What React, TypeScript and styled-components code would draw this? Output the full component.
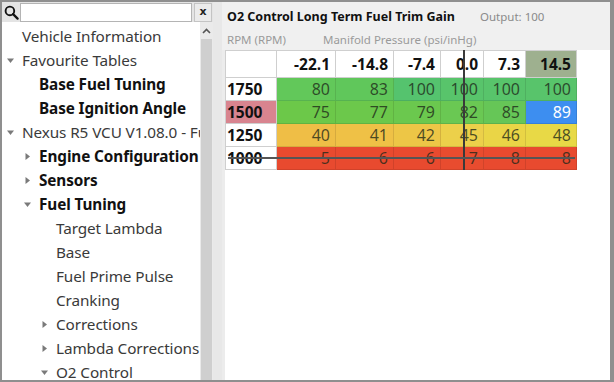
import React from 'react';
import styled, { createGlobalStyle } from 'styled-components';

const GlobalStyle = createGlobalStyle`
  html, body {
    margin: 0;
    padding: 0;
    overflow: hidden;
    background: #ffffff;
  }
  * {
    box-sizing: border-box;
  }
`;

type TreeItem = {
  label: string;
  level: number;
  bold?: boolean;
  arrow?: 'open' | 'closed';
};

const treeItems: TreeItem[] = [
  { label: 'Vehicle Information', level: 0 },
  { label: 'Favourite Tables', level: 0, arrow: 'open' },
  { label: 'Base Fuel Tuning', level: 1, bold: true },
  { label: 'Base Ignition Angle', level: 1, bold: true },
  { label: 'Nexus R5 VCU V1.08.0 - Fuel', level: 0, arrow: 'open' },
  { label: 'Engine Configuration', level: 1, bold: true, arrow: 'closed' },
  { label: 'Sensors', level: 1, bold: true, arrow: 'closed' },
  { label: 'Fuel Tuning', level: 1, bold: true, arrow: 'open' },
  { label: 'Target Lambda', level: 2 },
  { label: 'Base', level: 2 },
  { label: 'Fuel Prime Pulse', level: 2 },
  { label: 'Cranking', level: 2 },
  { label: 'Corrections', level: 2, arrow: 'closed' },
  { label: 'Lambda Corrections', level: 2, arrow: 'closed' },
  { label: 'O2 Control', level: 2, arrow: 'open' },
];

const columns = ['-22.1', '-14.8', '-7.4', '0.0', '7.3', '14.5'];
const colWidths = [51, 59, 58, 47, 43, 42, 51];

type Cell = { v: number; bg: string; fg?: string };
type Row = { rpm: string; headBg?: string; cells: Cell[] };

const rows: Row[] = [
  {
    rpm: '1750',
    cells: [
      { v: 80, bg: '#62c85a' },
      { v: 83, bg: '#60c75b' },
      { v: 100, bg: '#55c36e' },
      { v: 100, bg: '#58c46b' },
      { v: 100, bg: '#58c46b' },
      { v: 100, bg: '#58c46b' },
    ],
  },
  {
    rpm: '1500',
    headBg: '#d8848f',
    cells: [
      { v: 75, bg: '#6cc849' },
      { v: 77, bg: '#6cc84b' },
      { v: 79, bg: '#6bc84e' },
      { v: 82, bg: '#6ac853' },
      { v: 85, bg: '#66c657' },
      { v: 89, bg: '#3d8ef0', fg: '#ffffff' },
    ],
  },
  {
    rpm: '1250',
    cells: [
      { v: 40, bg: '#efbe46' },
      { v: 41, bg: '#efc146' },
      { v: 42, bg: '#edc646' },
      { v: 45, bg: '#ecd04a' },
      { v: 46, bg: '#ead546' },
      { v: 48, bg: '#e8d946' },
    ],
  },
  {
    rpm: '1000',
    cells: [
      { v: 5, bg: '#e84a2f' },
      { v: 6, bg: '#e84a2f' },
      { v: 6, bg: '#e84a2f' },
      { v: 7, bg: '#e84c2f' },
      { v: 8, bg: '#e84a2f' },
      { v: 8, bg: '#e84a2f' },
    ],
  },
];

const Arrow: React.FC<{ dir: 'open' | 'closed' }> = ({ dir }) => (
  <ArrowBox>
    {dir === 'open' ? (
      <svg width="9" height="9" viewBox="0 0 9 9">
        <polygon points="1,2.5 8,2.5 4.5,7" fill="#7a7a7a" />
      </svg>
    ) : (
      <svg width="9" height="9" viewBox="0 0 9 9">
        <polygon points="2.5,1 7,4.5 2.5,8" fill="#7a7a7a" />
      </svg>
    )}
  </ArrowBox>
);

const App: React.FC = () => {
  return (
    <>
      <GlobalStyle />
      <Frame>
        <Sidebar>
          <SearchBar>
            <SearchIcon>
              <svg width="15" height="15" viewBox="0 0 16 16">
                <circle cx="6.3" cy="6.3" r="4.6" fill="none" stroke="#111" strokeWidth="2" />
                <line x1="9.7" y1="9.7" x2="14.5" y2="14.5" stroke="#111" strokeWidth="2.4" strokeLinecap="round" />
              </svg>
            </SearchIcon>
            <SearchInput />
            <ClearButton>x</ClearButton>
          </SearchBar>
          <TreeArea>
            <TreeList>
              {treeItems.map((item) => (
                <TreeRow key={item.label} $level={item.level}>
                  {item.arrow ? <Arrow dir={item.arrow} /> : <ArrowBox />}
                  <TreeLabel $bold={item.bold}>{item.label}</TreeLabel>
                </TreeRow>
              ))}
            </TreeList>
            <ScrollBar>
              <ScrollUp>
                <svg width="9" height="6" viewBox="0 0 9 6">
                  <polyline points="1,5 4.5,1.5 8,5" fill="none" stroke="#555" strokeWidth="1.6" />
                </svg>
              </ScrollUp>
              <ScrollThumb />
            </ScrollBar>
          </TreeArea>
        </Sidebar>
        <Splitter />
        <Panel>
          <PanelHeader>
            <TitleRow>
              <Title>O2 Control Long Term Fuel Trim Gain</Title>
              <Output>Output: 100</Output>
            </TitleRow>
            <AxisRow>
              <AxisLabel>RPM (RPM)</AxisLabel>
              <AxisLabel>Manifold Pressure (psi/inHg)</AxisLabel>
            </AxisRow>
          </PanelHeader>
          <PanelBody>
            <TableWrap>
              <Grid $cols={colWidths}>
                <CornerCell />
                {columns.map((c, i) => (
                  <ColHead key={c} $active={i === columns.length - 1}>
                    {c}
                  </ColHead>
                ))}
                {rows.map((r) => (
                  <React.Fragment key={r.rpm}>
                    <RowHead $bg={r.headBg}>{r.rpm}</RowHead>
                    {r.cells.map((c, i) => (
                      <ValueCell key={i} $bg={c.bg} $fg={c.fg}>
                        {c.v}
                      </ValueCell>
                    ))}
                  </React.Fragment>
                ))}
              </Grid>
              <CursorLine />
              <StrikeLine />
            </TableWrap>
          </PanelBody>
        </Panel>
      </Frame>
    </>
  );
};

export default App;

const Frame = styled.div`
  width: 614px;
  height: 382px;
  display: flex;
  border: 2px solid #8f8f8f;
  border-right-width: 4px;
  background: #ffffff;
  font-family: 'Noto Sans', 'Open Sans', sans-serif;
  overflow: hidden;
`;

const Sidebar = styled.div`
  width: 211px;
  display: flex;
  flex-direction: column;
  background: #ffffff;
`;

const SearchBar = styled.div`
  height: 20px;
  display: flex;
  align-items: center;
  background: #e4e4e4;
  padding-right: 1px;
`;

const SearchIcon = styled.div`
  width: 18px;
  display: flex;
  justify-content: center;
  align-items: center;
`;

const SearchInput = styled.div`
  flex: 1;
  height: 19px;
  background: #ffffff;
  border: 1px solid #b4b4b4;
`;

const ClearButton = styled.div`
  width: 18px;
  height: 19px;
  margin-left: 2px;
  border: 1px solid #c4c4c4;
  background: #ebebeb;
  font-family: 'DejaVu Sans', sans-serif;
  font-size: 11px;
  font-weight: 700;
  color: #222;
  display: flex;
  align-items: center;
  justify-content: center;
  line-height: 1;
  padding-bottom: 2px;
`;

const TreeArea = styled.div`
  flex: 1;
  display: flex;
  min-height: 0;
`;

const TreeList = styled.div`
  flex: 1;
  overflow: hidden;
  padding-top: 2px;
`;

const TreeRow = styled.div<{ $level: number }>`
  height: 24px;
  display: flex;
  align-items: center;
  padding-left: ${(p) => 2 + p.$level * 17}px;
  white-space: nowrap;
`;

const ArrowBox = styled.span`
  width: 18px;
  flex-shrink: 0;
  display: flex;
  align-items: center;
  padding-left: 2px;
`;

const TreeLabel = styled.span<{ $bold?: boolean }>`
  font-size: 15.3px;
  color: ${(p) => (p.$bold ? '#111111' : '#3a3a3a')};
  font-weight: ${(p) => (p.$bold ? 700 : 400)};
  letter-spacing: -0.1px;
`;

const ScrollBar = styled.div`
  width: 13px;
  display: flex;
  flex-direction: column;
  background: #eaeaea;
`;

const ScrollUp = styled.div`
  height: 17px;
  display: flex;
  align-items: center;
  justify-content: center;
`;

const ScrollThumb = styled.div`
  flex: 1;
  margin: 0 1px;
  background: #cfcfcf;
`;

const Splitter = styled.div`
  width: 9px;
  background: #e8e8e8;
`;

const Panel = styled.div`
  flex: 1;
  display: flex;
  flex-direction: column;
  background: #f0f0f0;
`;

const PanelHeader = styled.div`
  height: 48px;
  padding: 6px 0 0 5px;
  display: flex;
  flex-direction: column;
`;

const TitleRow = styled.div`
  display: flex;
  align-items: baseline;
  height: 18px;
`;

const Title = styled.div`
  font-size: 12.5px;
  font-weight: 700;
  color: #111;
  width: 253px;
`;

const Output = styled.div`
  font-size: 11.5px;
  color: #8a8a8a;
`;

const AxisRow = styled.div`
  display: flex;
  gap: 37px;
  margin-top: 6px;
`;

const AxisLabel = styled.div`
  font-size: 11.5px;
  color: #9a9a9a;
`;

const PanelBody = styled.div`
  flex: 1;
  background: #ffffff;
  border-left: 3px solid #ececec;
`;

const TableWrap = styled.div`
  position: relative;
  width: max-content;
`;

const Grid = styled.div<{ $cols: number[] }>`
  display: grid;
  grid-template-columns: ${(p) => p.$cols.map((c) => `${c}px`).join(' ')};
  grid-template-rows: 27px repeat(4, 23px);
  border-left: 1px solid #cfcfcf;
  border-top: 1px solid #cfcfcf;
`;

const CornerCell = styled.div`
  background: #ffffff;
  border-right: 1px solid #cfcfcf;
  border-bottom: 1px solid #cfcfcf;
`;

const ColHead = styled.div<{ $active?: boolean }>`
  background: ${(p) => (p.$active ? '#9eb08f' : '#ffffff')};
  border-right: 1px solid #cfcfcf;
  border-bottom: 1px solid #cfcfcf;
  font-size: 15.5px;
  font-weight: 700;
  color: #111;
  display: flex;
  align-items: center;
  justify-content: flex-end;
  padding-right: 5px;
`;

const RowHead = styled.div<{ $bg?: string }>`
  background: ${(p) => p.$bg ?? '#ffffff'};
  border-right: 1px solid #cfcfcf;
  border-bottom: 1px solid #cfcfcf;
  font-size: 15.5px;
  font-weight: 700;
  color: #111;
  display: flex;
  align-items: center;
  padding-left: 1px;
`;

const ValueCell = styled.div<{ $bg: string; $fg?: string }>`
  background: ${(p) => p.$bg};
  color: ${(p) => p.$fg ?? 'rgba(30, 40, 25, 0.78)'};
  border-right: 1px solid rgba(0, 0, 0, 0.1);
  border-bottom: 1px solid rgba(0, 0, 0, 0.1);
  font-size: 16px;
  display: flex;
  align-items: center;
  justify-content: flex-end;
  padding-right: 5px;
`;

const CursorLine = styled.div`
  position: absolute;
  left: 238px;
  top: 0;
  bottom: 0;
  width: 2px;
  background: #3a3a3a;
`;

const StrikeLine = styled.div`
  position: absolute;
  left: 3px;
  right: 2px;
  bottom: 11px;
  height: 2px;
  background: #555555;
`;
